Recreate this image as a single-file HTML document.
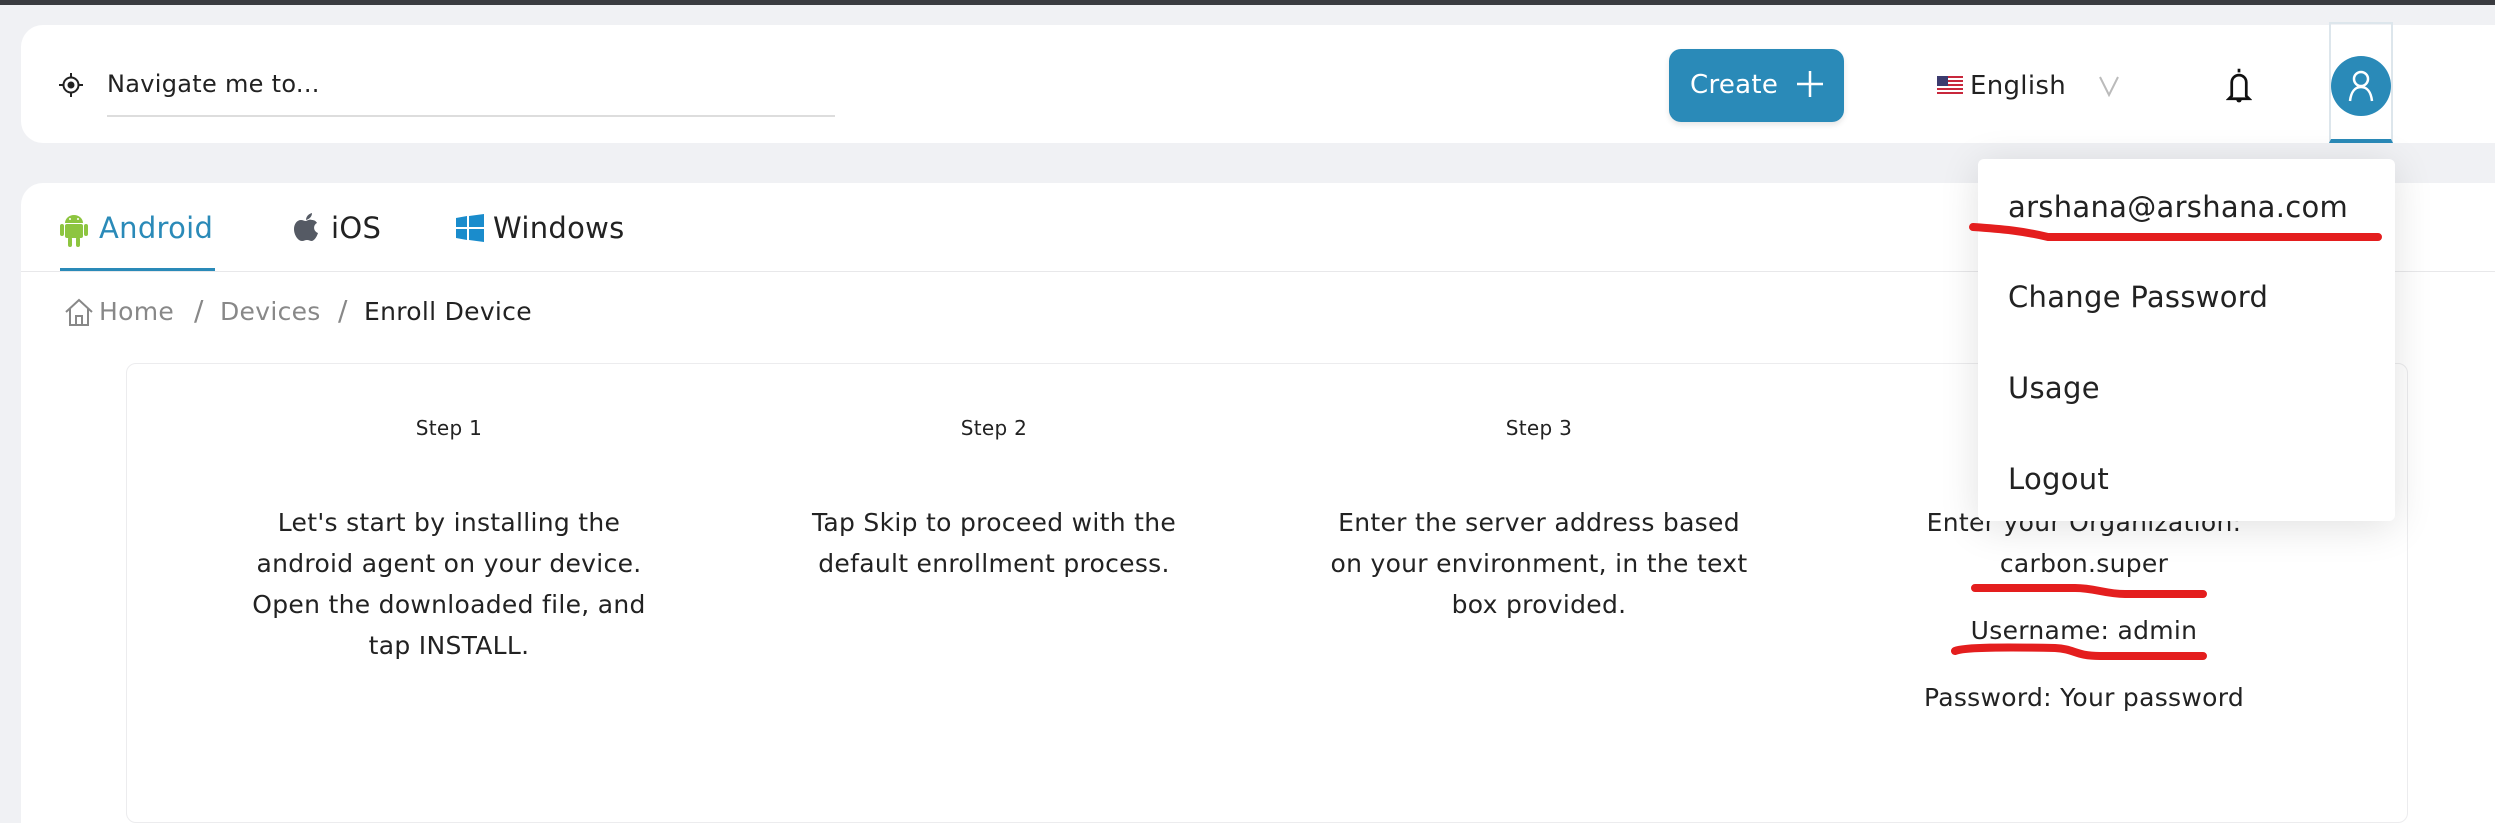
<!DOCTYPE html>
<html><head><meta charset="utf-8"><style>
*{box-sizing:border-box;margin:0;padding:0}
body{width:2495px;height:800px;overflow:hidden;background:#f0f1f4;font-family:"DejaVu Sans","Liberation Sans",sans-serif;color:#222;position:relative;letter-spacing:0.3px}
.abs{position:absolute}
.topbar{left:0;top:0;width:2495px;height:5px;background:#3a3b40}
.hdr{left:21px;top:25px;width:2474px;height:118px;background:#fff;border-radius:22px 0 0 22px}
.card{left:21px;top:183px;width:2474px;height:640px;background:#fff;border-radius:22px 0 0 0}
.t{white-space:nowrap}
.step{font-size:20px;color:#222;text-align:center;width:500px}
.body{font-size:25px;line-height:41px;text-align:center;width:560px;color:#222}
.dd{left:1978px;top:159px;width:417px;height:362px;background:#fff;border-radius:6px;box-shadow:0 6px 40px rgba(0,0,0,.12)}
.di{font-size:29px;color:#222;left:2008px}
</style></head><body>
<div class="abs topbar"></div>
<div class="abs hdr"></div>
<svg class="abs" style="left:58px;top:72px" width="26" height="26" viewBox="0 0 26 26"><circle cx="13" cy="13" r="7.5" fill="none" stroke="#222" stroke-width="2"/><circle cx="13" cy="13" r="3.5" fill="#222"/><path d="M13 1v5M13 20v5M1 13h5M20 13h5" stroke="#222" stroke-width="2"/></svg>
<div class="abs t" style="left:107px;top:70px;font-size:24px;color:#222">Navigate me to...</div>
<div class="abs" style="left:107px;top:115px;width:728px;height:2px;background:#ddd"></div>
<div class="abs" style="left:1669px;top:49px;width:175px;height:73px;background:#2a8ab8;border-radius:12px;box-shadow:0 3px 6px rgba(0,0,0,.1)"></div>
<div class="abs t" style="left:1690px;top:70px;font-size:26px;color:#fff">Create</div>
<svg class="abs" style="left:1796px;top:70px" width="28" height="28"><path d="M14 1v26M1 14h26" stroke="#fff" stroke-width="2.5"/></svg>
<svg class="abs" style="left:1937px;top:76px" width="26" height="18" viewBox="0 0 26 18"><rect width="26" height="18" fill="#fff"/><g fill="#c8283c"><rect y="0" width="26" height="2"/><rect y="4" width="26" height="2"/><rect y="8" width="26" height="2"/><rect y="12" width="26" height="2"/><rect y="16" width="26" height="2"/></g><rect width="11" height="10" fill="#3c3b6e"/></svg>
<div class="abs t" style="left:1970px;top:71px;font-size:26px;color:#222">English</div>
<svg class="abs" style="left:2098px;top:75px" width="22" height="22"><path d="M2 2l9 18 9-18" fill="none" stroke="#bbb" stroke-width="2"/></svg>
<svg class="abs" style="left:2226px;top:66px" width="26" height="40" viewBox="0 0 28 44"><path d="M14 3v4M6 33V18a8 8 0 0 1 16 0v15l3 3H3z" fill="none" stroke="#111" stroke-width="3"/><path d="M11 37a3 3 0 0 0 6 0" fill="#111"/></svg>
<div class="abs" style="left:2329px;top:22px;width:64px;height:121px;border:2px solid #dde6ec;border-bottom:4px solid #2a8ab8"></div>
<div class="abs" style="left:2331px;top:56px;width:60px;height:60px;border-radius:50%;background:#2a8ab8"></div>
<svg class="abs" style="left:2347px;top:69px" width="28" height="34" viewBox="0 0 28 34"><circle cx="14" cy="10" r="7" fill="none" stroke="#fff" stroke-width="2.5"/><path d="M3 32c1-9 5-14 11-14s10 5 11 14" fill="none" stroke="#fff" stroke-width="2.5"/></svg>

<div class="abs card"></div>
<svg class="abs" style="left:60px;top:213px" width="28" height="34" viewBox="0 0 28 34"><g fill="#8dc540"><path d="M5 10a9 8 0 0 1 18 0z"/><rect x="5" y="11" width="18" height="14" rx="2"/><rect x="0" y="11" width="4" height="12" rx="2"/><rect x="24" y="11" width="4" height="12" rx="2"/><rect x="8" y="24" width="4" height="10" rx="2"/><rect x="16" y="24" width="4" height="10" rx="2"/></g><circle cx="10" cy="6" r="1" fill="#fff"/><circle cx="18" cy="6" r="1" fill="#fff"/></svg>
<div class="abs t" style="left:99px;top:211px;font-size:29px;color:#2a8ab8">Android</div>
<div class="abs" style="left:60px;top:268px;width:155px;height:4px;background:#2a8ab8"></div>
<div class="abs" style="left:21px;top:271px;width:2474px;height:1px;background:#e8e8ea"></div>
<svg class="abs" style="left:293px;top:213px" width="26" height="30" viewBox="0 0 26 30"><path d="M13 8c2-1 4-2 6-1 2 0 4 1 5 3-4 2-4 8 1 10-1 3-3 7-6 8-2 0-3-1-5-1s-3 1-5 1C5 28 1 22 1 16c0-5 3-9 7-9 2 0 3 1 5 1z" fill="#555a64"/><path d="M13 7c0-3 2-6 6-7 0 3-2 6-6 7z" fill="#555a64"/></svg>
<div class="abs t" style="left:331px;top:211px;font-size:29px;color:#222">iOS</div>
<svg class="abs" style="left:456px;top:214px" width="28" height="28" viewBox="0 0 28 28"><path d="M0 4l11-2v11H0zM13 2l15-2v13H13zM0 15h11v11L0 24zM13 15h15v13l-15-2z" fill="#1a8ccc"/></svg>
<div class="abs t" style="left:493px;top:211px;font-size:29px;color:#222">Windows</div>

<svg class="abs" style="left:64px;top:297px" width="30" height="30" viewBox="0 0 30 30"><path d="M2 15L15 3l13 12M6 12v16h18V12M12 28v-9h6v9" fill="none" stroke="#888" stroke-width="2"/></svg>
<div class="abs t" style="left:99px;top:297px;font-size:25px;color:#888">Home</div>
<div class="abs t" style="left:194px;top:294px;font-size:28px;color:#888">/</div>
<div class="abs t" style="left:220px;top:297px;font-size:25px;color:#888">Devices</div>
<div class="abs t" style="left:338px;top:294px;font-size:28px;color:#888">/</div>
<div class="abs t" style="left:364px;top:297px;font-size:25px;color:#222">Enroll Device</div>

<div class="abs" style="left:126px;top:363px;width:2282px;height:460px;border:1px solid #ececee;border-radius:10px"></div>

<div class="abs step t" style="left:199px;top:416px">Step 1</div>
<div class="abs step t" style="left:744px;top:416px">Step 2</div>
<div class="abs step t" style="left:1289px;top:416px">Step 3</div>
<div class="abs body" style="left:169px;top:502px">Let's start by installing the<br>android agent on your device.<br>Open the downloaded file, and<br>tap INSTALL.</div>
<div class="abs body" style="left:714px;top:502px">Tap Skip to proceed with the<br>default enrollment process.</div>
<div class="abs body" style="left:1259px;top:502px">Enter the server address based<br>on your environment, in the text<br>box provided.</div>
<div class="abs body" style="left:1804px;top:502px">Enter your Organization:<br>carbon.super</div>
<div class="abs body" style="left:1804px;top:610px">Username: admin</div>
<div class="abs body" style="left:1804px;top:677px">Password: Your password</div>

<div class="abs dd"></div>
<div class="abs di t" style="top:190px">arshana@arshana.com</div>
<div class="abs di t" style="top:280px">Change Password</div>
<div class="abs di t" style="top:371px">Usage</div>
<div class="abs di t" style="top:462px">Logout</div>

<svg class="abs" style="left:0;top:0" width="2495" height="800"><g fill="none" stroke="#e41e1e" stroke-width="8" stroke-linecap="round"><path d="M1973 227c30 2 50 4 75 10h330"/><path d="M1975 588h100c20 0 30 6 50 6h78"/><path d="M1955 651c10-4 50-4 100-3 20 1 20 8 45 8h103"/></g></svg>
</body></html>
